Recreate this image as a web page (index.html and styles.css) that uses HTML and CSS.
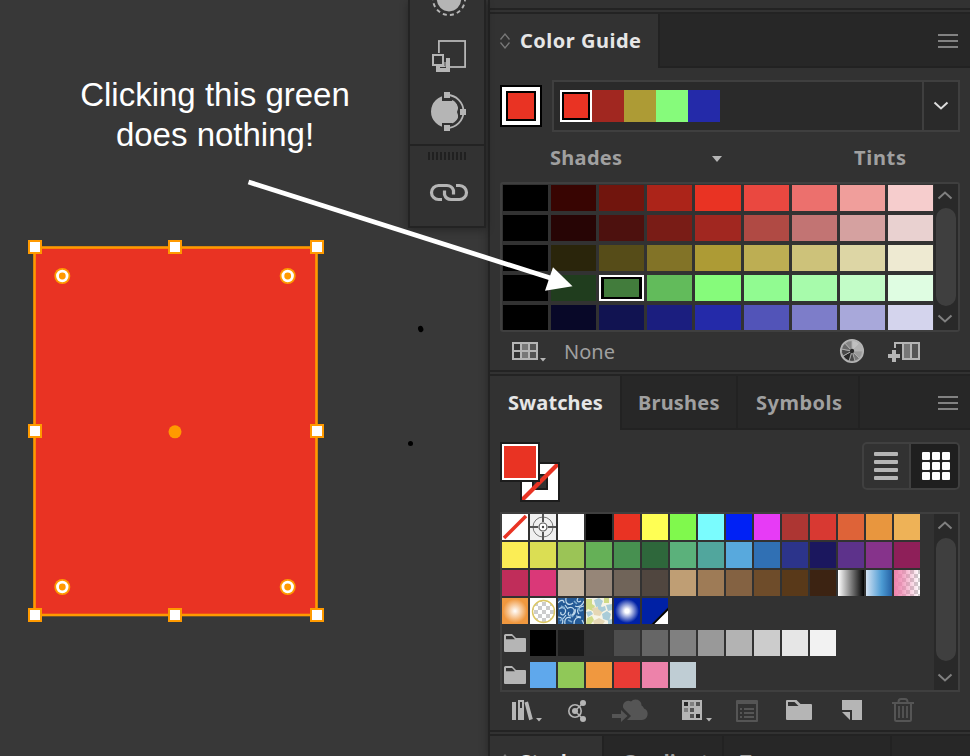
FILE: index.html
```
<!DOCTYPE html>
<html lang="en">
<head>
    <meta charset="UTF-8">
    <meta name="viewport" content="width=device-width, initial-scale=1.0">
    <title>Color Guide</title>
    <link rel="stylesheet" href="styles.css">
</head>
<body>

<!-- artwork used by the special swatches -->
<svg class="defs" width="0" height="0">
    <symbol id="none" viewBox="0 0 26 26">
        <rect width="26" height="26" fill="#fff"/>
        <path d="M2 24 L24 2" stroke="#e93323" stroke-width="3.6"/>
    </symbol>
    <symbol id="registration" viewBox="0 0 26 26">
        <rect width="26" height="26" fill="#f0f0f0"/>
        <circle cx="13" cy="13" r="10" fill="none" stroke="#777" stroke-width="1"/>
        <path d="M13 0v8M13 18v8M0 13h8M18 13h8" stroke="#555" stroke-width="2"/>
        <circle cx="13" cy="13" r="4" fill="#fff" stroke="#555" stroke-width="1.2"/>
        <circle cx="13" cy="13" r="1.2" fill="#444"/>
    </symbol>
    <symbol id="ring" viewBox="0 0 26 26">
        <rect width="26" height="26" fill="#fff"/>
        <circle cx="13.500" cy="13.500" r="11" fill="url(#checks)" stroke="#dcc763" stroke-width="1.400"/>
    </symbol>
    <symbol id="vines" viewBox="0 0 26 26">
        <rect width="26" height="26" fill="#245a96"/>
        <g fill="none" stroke="#c3dcee" stroke-width="1.200">
            <path d="M0 5c3-4 6-3 6 0M8 0c-1 6 3 8 7 5M17 8c4 2 8-1 9-5M20 0c-2 3 0 5 3 3"/>
            <path d="M1 11c4-3 8 0 6 4s-5 1-4-1M10 10c5-2 8 2 5 6s-6 1-4-2M26 8c-6 1-8 5-5 8"/>
            <path d="M0 19c4 0 6 3 4 7M7 26c-1-5 2-8 6-6M16 26c0-5 3-8 7-6M14 18c3-2 4-4 3-7"/>
            <path d="M7 7l3 4M8 17l-3 4M18 18l5 1M24 22l2 4"/>
        </g>
        <path d="M3 8l4 2M16 3l3 3M12 16l3 3M20 10l2 3M2 23l3-3M10 22l4 2M22 13l3-1" stroke="#79a8d0" stroke-width="1.600"/>
    </symbol>
    <symbol id="camo" viewBox="0 0 26 26">
        <rect width="26" height="26" fill="#f6f4e6"/>
        <path d="M0 1h6v5l3 2-2 5-5-2-2 2zM18 0h5v5h-5zM1 20l5-2 2 4-3 4H0z" fill="#cfdb87"/>
        <path d="M8 2l5-2 4 3-2 5-5 1zM20 7l6-1v6l-4 1zM16 16l5-3 4 3-2 7-6-2zM0 14l5-1 2 3-5 3z" fill="#a9ccd8"/>
        <path d="M6 10l6-1 5 4-3 5-6-1zM7 23l6-3 6 3-2 3H8z" fill="#e5d7b4"/>
        <path d="M12 6l4 3 3-1 1 4-4 2-4-3zM22 22l4-1v5h-4z" fill="#a9ccd8"/>
    </symbol>
    <symbol id="corner" viewBox="0 0 26 26">
        <rect width="26" height="26" fill="#0021a5"/>
        <path d="M26 10V26H10z" fill="#fff"/>
        <path d="M27 10L10 27" stroke="#000" stroke-width="2"/>
    </symbol>
    <symbol id="folder" viewBox="0 0 26 26">
        <path d="M2 5.500q0-1.500 1.500-1.500H10l4 4h9q1 0 1 1v12q0 1-1 1H3q-1 0-1-1z" fill="#b5b5b5"/>
        <path d="M4 6h6l3 3.300H4z" fill="#323232"/>
    </symbol>
    <symbol id="chevron" viewBox="0 0 16 10">
        <path d="M1.500 1.500L8 7.500l6.500-6" fill="none" stroke="currentColor" stroke-width="2"/>
    </symbol>
    <symbol id="updown" viewBox="0 0 12 18">
        <path d="M1.500 7.500L6 2l4.500 5.500M1.500 10.500L6 16l4.500-5.500" fill="none" stroke="#787878" stroke-width="1.300"/>
    </symbol>
    <defs>
        <pattern id="checks" width="8" height="8" patternUnits="userSpaceOnUse">
            <rect width="8" height="8" fill="#fff"/>
            <path d="M0 0h4v4H0zM4 4h4v4H4z" fill="#ccc"/>
        </pattern>
    </defs>
</svg>

<main class="canvas">
    <p class="note">Clicking this green<br>does nothing!</p>
    <svg class="artboard" width="488" height="756">
        <rect x="34.500" y="247.500" width="282" height="367.500" fill="#e93323" stroke="#ff9a00" stroke-width="2.600"/>
        <g fill="#fff" stroke="#ff9a00" stroke-width="2">
            <rect x="29" y="241" width="12" height="12"/>
            <rect x="169" y="241" width="12" height="12"/>
            <rect x="311" y="241" width="12" height="12"/>
            <rect x="29" y="425" width="12" height="12"/>
            <rect x="311" y="425" width="12" height="12"/>
            <rect x="29" y="609" width="12" height="12"/>
            <rect x="169" y="609" width="12" height="12"/>
            <rect x="311" y="609" width="12" height="12"/>
        </g>
        <g fill="#ff9a00">
            <circle cx="62.300" cy="276" r="8"/>
            <circle cx="287.700" cy="276" r="8"/>
            <circle cx="62.300" cy="587" r="8"/>
            <circle cx="287.700" cy="587" r="8"/>
            <circle cx="175" cy="431.800" r="6.500"/>
        </g>
        <g fill="#ff9a00" stroke="#fff" stroke-width="2.800">
            <circle cx="62.300" cy="276" r="4.800"/>
            <circle cx="287.700" cy="276" r="4.800"/>
            <circle cx="62.300" cy="587" r="4.800"/>
            <circle cx="287.700" cy="587" r="4.800"/>
        </g>
        <ellipse cx="420.700" cy="329" rx="2.600" ry="3.200" transform="rotate(-20 420.700 329)"/>
        <circle cx="410.500" cy="443.500" r="2.500"/>
    </svg>
</main>

<aside class="strip">
    <svg width="74" height="144" viewBox="410 0 74 144">
        <circle cx="449" cy="-0.800" r="12.200" fill="#b5b5b5"/>
        <circle cx="449" cy="-1" r="16" fill="none" stroke="#b5b5b5" stroke-width="1.900" stroke-dasharray="4 3.180" stroke-dashoffset="1.500"/>

        <rect x="438.900" y="41" width="26.200" height="26" fill="none" stroke="#b5b5b5" stroke-width="1.800"/>
        <path d="M436 58h14v14h-14z" fill="#b5b5b5"/>
        <path d="M438 62h8v6h-6v-2h-4v-4z" fill="#323232"/>
        <path d="M440 66.500h5v-4.500" fill="none" stroke="#b5b5b5" stroke-width="1.200"/>
        <path d="M430 53h16v9h-2v4h-14z" fill="#323232"/>
        <rect x="433" y="55" width="10" height="10" fill="#323232" stroke="#b5b5b5" stroke-width="2"/>

        <path d="M447 95.500A16 16 0 0 0 447 127.500Q458 124 458.300 116L457 112L458.300 108Q456 99 447 95.500Z" fill="#b5b5b5"/>
        <path d="M447 95.500A16.200 16.200 0 0 1 447 127.900" fill="none" stroke="#323232" stroke-width="7"/>
        <path d="M442 91h10v10h-10zM458 107h10v10h-10zM442 123h10v10h-10z" fill="#323232"/>
        <path d="M447 95A16.200 16.200 0 0 1 447 128" fill="none" stroke="#b5b5b5" stroke-width="1.800"/>
        <path d="M444 92h6v6h-6zM460 109h6v6h-6zM444 125h6v6h-6z" fill="#b5b5b5"/>
    </svg>
    <div class="strip-group">
        <div class="grip"></div>
        <svg class="link" width="40" height="20" viewBox="0 0 40 20" fill="none" stroke="#b5b5b5" stroke-width="3.200">
            <path d="M13 16.500H9.500a7 7 0 0 1 0-14H18a7 7 0 0 1 6.500 5v4"/>
            <path d="M27 2.500h3.500a7 7 0 0 1 0 14H22a7 7 0 0 1-6.500-5v-4"/>
        </svg>
    </div>
</aside>

<aside class="dock">
    <div class="panel-end"></div>

    <section class="panel guide">
        <header class="tabs">
            <div class="tab active wide-tab"><svg width="12" height="18"><use href="#updown"/></svg><span>Color Guide</span></div>
            <div class="menu"><i></i><i></i><i></i></div>
        </header>
        <div class="harmony">
            <div class="base"></div>
            <div class="rule">
                <div class="rule-colors" id="rule"></div>
                <button class="drop"><svg width="16" height="10"><use href="#chevron"/></svg></button>
            </div>
        </div>
        <div class="legend">
            <span class="shades">Shades</span>
            <span class="triangle"></span>
            <span class="tints">Tints</span>
        </div>
        <div class="box variations">
            <div class="shade-grid" id="shades"></div>
            <div class="scroll">
                <svg class="up" width="16" height="10"><use href="#chevron"/></svg>
                <div class="thumb"></div>
                <svg width="16" height="10"><use href="#chevron"/></svg>
            </div>
        </div>
        <footer class="guide-footer">
            <svg width="40" height="24" viewBox="0 0 40 24">
                <rect x="2" y="2" width="26" height="18" fill="#b5b5b5"/>
                <path d="M4 4h6v6H4zM4 12h6v6H4z" fill="#323232"/>
                <path d="M12 4h6v6h-6zM12 12h6v6h-6z" fill="#777"/>
                <path d="M20 4h6v6h-6zM20 12h6v6h-6z" fill="#555"/>
                <path d="M30 18h6l-3 3.500z" fill="#b5b5b5"/>
            </svg>
            <span class="library">None</span>
            <svg class="wheel" width="26" height="26" viewBox="-13 -13 26 26">
                <circle r="11.200" fill="#777" stroke="#b5b5b5" stroke-width="1.700"/>
                <g stroke="#b5b5b5" stroke-width=".8">
                    <path d="M0 0L0-10.500A10.500 10.500 0 0 1 7.400-7.400z" fill="#c0c0c0"/>
                    <path d="M0 0L7.400-7.400A10.500 10.500 0 0 1 10.500 0z" fill="#b2b2b2"/>
                    <path d="M0 0H10.500A10.500 10.500 0 0 1 7.400 7.400z" fill="#999"/>
                    <path d="M0 0L7.400 7.400A10.500 10.500 0 0 1 2.500 10.200z" fill="#777"/>
                    <path d="M0 0L3 10A10.500 10.500 0 0 1-3 10z" fill="#4a4a4a"/>
                    <path d="M0 0L-3 10A10.500 10.500 0 0 1-9 5z" fill="#292929"/>
                    <path d="M0 0L-9 5A10.500 10.500 0 0 1-10.500-2z" fill="#484848"/>
                    <path d="M0 0L-10.500-2A10.500 10.500 0 0 1-7-7.800z" fill="#686868"/>
                    <path d="M0 0L-7-7.800A10.500 10.500 0 0 1 0-10.500z" fill="#858585"/>
                </g>
                <circle r="2.200" fill="#292929"/>
            </svg>
            <svg class="add-group" width="36" height="24" viewBox="0 0 36 24">
                <path d="M8 2h26v18H16V4h-6v4H8z" fill="#b5b5b5"/>
                <path d="M18 4h6v14h-6z" fill="#777"/>
                <path d="M26 4h6v14h-6z" fill="#555"/>
                <path d="M6 10h4v4h4v4h-4v4H6v-4H2v-4h4z" fill="#b5b5b5"/>
            </svg>
        </footer>
    </section>

    <section class="panel swatches">
        <header class="tabs">
            <div class="tab active swatches-tab"><span>Swatches</span></div>
            <div class="tab brushes-tab"><span>Brushes</span></div>
            <div class="tab symbols-tab"><span>Symbols</span></div>
            <div class="menu"><i></i><i></i><i></i></div>
        </header>
        <div class="toolbar">
            <svg width="60" height="60" viewBox="0 0 60 60">
                <rect x="21" y="21" width="38" height="38" fill="#fff" stroke="#1c1c1c" stroke-width="2"/>
                <rect x="33" y="33" width="14" height="14" fill="#323232" stroke="#1c1c1c" stroke-width="2"/>
                <path d="M22 55L55 22H58V25L25 58H22z" fill="#e93323"/>
                <rect x="1" y="1" width="38" height="38" fill="#fff" stroke="#1c1c1c" stroke-width="2"/>
                <rect x="4" y="4" width="32" height="32" fill="#e93323"/>
            </svg>
            <div class="view">
                <div class="view-list"><i></i><i></i><i></i><i></i></div>
                <div class="view-grid"><i></i><i></i><i></i><i></i><i></i><i></i><i></i><i></i><i></i></div>
            </div>
        </div>
        <div class="box library-box">
            <div class="swatch-list">
                <div class="swatch-row" id="main"></div>
                <div class="swatch-row" id="grays"></div>
                <div class="swatch-row" id="brights"></div>
            </div>
            <div class="scroll">
                <svg class="up" width="16" height="10"><use href="#chevron"/></svg>
                <div class="thumb"></div>
                <svg width="16" height="10"><use href="#chevron"/></svg>
            </div>
        </div>
        <footer class="swatch-footer">
            <svg width="34" height="28" fill="#b5b5b5">
                <path d="M2 5h4v18H2zM8 3h6v20H8zM14.500 5.500l3.500-1 4.800 17.500-3.600 1.200z"/>
                <path d="M10 5h2v6h-2z" fill="#323232"/>
                <path d="M26 21h6l-3 3.500z"/>
            </svg>
            <svg width="28" height="28" fill="#b5b5b5">
                <circle cx="11" cy="14" r="6.200" fill="none" stroke="#b5b5b5" stroke-width="1.600"/>
                <path d="M19 6l-8 8 8 8" fill="none" stroke="#b5b5b5" stroke-width="1.400"/>
                <circle cx="11" cy="14" r="3"/><circle cx="19" cy="6" r="3"/><circle cx="19" cy="22" r="3"/>
            </svg>
            <svg width="42" height="28" fill="#555">
                <path d="M17 23h15a6 6 0 0 0 2-11.500A4.500 4.500 0 0 0 31.500 8.500A6 6 0 0 0 21 4.500A5.500 5.500 0 0 0 13 10z"/>
                <path d="M12 10l9 9-9 9z" fill="#323232"/>
                <path d="M2 17h9v-4l6.500 6-6.500 6v-4H2z"/>
            </svg>
            <svg width="34" height="28" fill="#b5b5b5">
                <rect x="2" y="3" width="20" height="20"/>
                <path d="M4 5h4v4H4zM16 17h4v4h-4z" fill="#292929"/>
                <path d="M10 5h4v4h-4zM4 11h4v4H4z" fill="#808080"/>
                <path d="M16 5h4v4h-4zM10 11h4v4h-4zM10 17h4v4h-4z" fill="#555"/>
                <path d="M26 21h6l-3 3.500z"/>
            </svg>
            <svg width="28" height="28" fill="#555">
                <path d="M3 3h20q1 0 1 1v20q0 1-1 1H3q-1 0-1-1V4q0-1 1-1zM4 7v16h18V7z" fill-rule="evenodd"/>
                <path d="M6 11h2v2H6zM6 15h2v2H6zM6 19h2v2H6zM10 11h10v2H10zM10 15h10v2H10zM10 19h10v2H10z"/>
            </svg>
            <svg width="30" height="28" fill="#b5b5b5">
                <path d="M2 4q0-1 1-1h9.500l4 4H27q1 0 1 1v14q0 1-1 1H3q-1 0-1-1z"/>
                <path d="M4 5h6.500l4 4H4z" fill="#323232"/>
            </svg>
            <svg width="24" height="28" fill="#b5b5b5">
                <path d="M2 3h20v20H12V13H2zM2 15h8v8z"/>
            </svg>
            <svg width="26" height="28" fill="none" stroke="#555" stroke-width="2">
                <path d="M2 6h22M5 6v16.500q0 1.500 1.500 1.500h13q1.500 0 1.500-1.500V6M8.500 5q0-3 2.500-3h4q2.500 0 2.500 3"/>
                <path d="M9 9v12M13 9v12M17 9v12" stroke-width="1.800"/>
            </svg>
        </footer>
    </section>

    <section class="panel stroke">
        <header class="tabs">
            <div class="tab active stroke-tab"><svg width="12" height="18"><use href="#updown"/></svg><span>Stroke</span></div>
            <div class="tab gradient-tab"><span>Gradient</span></div>
            <div class="tab transparency-tab"><span>Transparency</span></div>
        </header>
    </section>
</aside>

<svg class="arrow" width="340" height="130" viewBox="240 170 340 130" fill="#fff">
    <path d="M248.500 182L552 278.500" stroke="#fff" stroke-width="4.800"/>
    <path d="M553 267.300L572.500 286.300L545 290.800z"/>
</svg>

<script>
    const rule = ['#e93323', '#a12720', '#ad9b35', '#86fb7b', '#242aa9'];

    const shades = [
        ['#000000', '#380502', '#71150d', '#ac2419', '#e93323', '#ea4840', '#ec706d', '#f09e9b', '#f6cdcd'],
        ['#000000', '#270505', '#4d110e', '#791c16', '#a12720', '#b04a44', '#c27473', '#d5a1a0', '#e9d1d0'],
        ['#000000', '#2a250b', '#564c18', '#827327', '#ad9b35', '#bdae53', '#cdc27a', '#ddd6a5', '#eeead2'],
        ['#000000', '#203d1e', '#427c3c', '#62bb5b', '#86fb7b', '#91fb91', '#a7fbab', '#c2fcc7', '#dffde2'],
        ['#000000', '#080828', '#111351', '#1b1e7f', '#242aa9', '#5254b8', '#7d7dc9', '#a8a8da', '#d4d4ed']
    ];

    const main = [
        '@none', '@registration', '#ffffff', '#000000', '#e93323', '#ffff54', '#80f94d', '#7afcfe', '#0021f5', '#e73bf6', '#ad3633', '#d83932', '#de6338', '#e8963e', '#eeb257',
        '#fbed55', '#dbde53', '#9bc456', '#65b057', '#479050', '#2e673b', '#5bb17b', '#51a69d', '#58a9dd', '#3070b4', '#2c348b', '#1b175e', '#5d328b', '#86338b', '#8e1f59',
        '#c02d5a', '#da3878', '#c4b39f', '#968678', '#706459', '#50463f', '#bf9e74', '#9e7b56', '#846242', '#6e4c2a', '#593919', '#3c2312', '.fade-black', '.fade-blue', '.fade-pink',
        '.glow-orange', '@ring', '@vines', '@camo', '.glow-blue', '@corner'
    ];

    const grays = ['@folder', '#000000', '#1a1a1a', '#333333', '#4d4d4d', '#666666', '#808080', '#999999', '#b3b3b3', '#cccccc', '#e6e6e6', '#f2f2f2'];
    const brights = ['@folder', '#5fa8ec', '#90c858', '#f0983f', '#e83b35', '#ed82aa', '#bfcdd4'];

    // '@name' is a symbol, '.name' is a css class, anything else is a colour
    function swatch(value) {
        if (value[0] === '@') {
            return `<svg class="swatch"><use href="#${value.slice(1)}"/></svg>`;
        }
        if (value[0] === '.') {
            return `<div class="swatch ${value.slice(1)}"></div>`;
        }
        return `<div class="swatch" style="background:${value}"></div>`;
    }

    function fill(id, colors) {
        document.getElementById(id).innerHTML = colors.map(swatch).join('');
    }

    fill('rule', rule);
    fill('shades', shades.flat());
    fill('main', main);
    fill('grays', grays);
    fill('brights', brights);

    document.querySelector('#rule .swatch').classList.add('current');
    document.querySelectorAll('#shades .swatch')[29].classList.add('picked');
</script>

</body>
</html>
```
FILE: styles.css
```
* {
    box-sizing: border-box;
}
body {
    margin: 0;
    width: 970px;
    height: 756px;
    overflow: hidden;
    display: flex;
    position: relative;
    background: #383838;
    font-family: "Noto Sans", sans-serif;
    color: #a0a0a0;
}
svg {
    display: block;
    flex: none;
}
.defs, .artboard, .arrow {
    position: absolute;
}

/* canvas */
.canvas {
    width: 488px;
    flex: none;
    position: relative;
}
.artboard {
    left: 0;
    top: 0;
}
.note {
    margin: 0;
    padding: 75px 58px 0 0;
    text-align: center;
    color: #fff;
    font: 33px/40px "Liberation Sans", sans-serif;
}
.arrow {
    left: 240px;
    top: 170px;
}

/* floating icon strip */
.strip {
    position: absolute;
    left: 408px;
    top: 0;
    width: 78px;
    height: 228px;
    background: #323232;
    border: 2px solid #232323;
    border-top: 0;
    box-shadow: 0 2px 8px rgba(0, 0, 0, .3);
}
.strip-group {
    border-top: 2px solid #232323;
    display: flex;
    flex-direction: column;
    align-items: center;
    padding-top: 6px;
    gap: 23px;
}
.grip {
    width: 38px;
    height: 8px;
    background: repeating-linear-gradient(90deg, #202020 0 2px, #323232 2px 4px);
}
.link {
    margin-left: 4px;
}

/* dock */
.dock {
    flex: 1;
    height: 756px;
    overflow: hidden;
    background: #323232;
    border-left: 2px solid #232323;
    box-shadow: 0 0 8px rgba(0, 0, 0, .35);
}
.panel-end {
    height: 10px;
    border-bottom: 2px solid #232323;
    margin-bottom: 2px;
}
.panel {
    border-top: 2px solid #232323;
    border-bottom: 2px solid #232323;
    margin-bottom: 2px;
}
.guide {
    height: 360px;
}
.swatches {
    height: 358px;
}
.stroke {
    height: 22px;
    margin-bottom: 0;
    border-bottom: 0;
    overflow: hidden;
}
.tabs {
    display: flex;
    height: 54px;
    background: #272727;
    box-shadow: inset 0 -2px #222;
}
.tab {
    display: flex;
    align-items: center;
    padding: 0 0 2px 18px;
    border-right: 2px solid #222;
    font-size: 20px;
    font-weight: 700;
    white-space: nowrap;
}
.tab.active {
    background: #323232;
    color: #e6e6e6;
}
.tab svg {
    margin-top: 2px;
}
.wide-tab, .stroke-tab {
    padding-left: 9px;
    gap: 9px;
}
.wide-tab {
    width: 170px;
    letter-spacing: .5px;
}
.swatches-tab {
    width: 132px;
    letter-spacing: .1px;
}
.brushes-tab {
    width: 116px;
    padding-left: 16px;
    letter-spacing: .2px;
}
.symbols-tab {
    width: 122px;
    letter-spacing: .5px;
}
.stroke .tab {
    padding-bottom: 4px;
}
.stroke-tab {
    width: 114px;
}
.gradient-tab {
    width: 120px;
}
.transparency-tab {
    width: 168px;
    padding-left: 16px;
}
.menu {
    margin: 20px 12px 0 auto;
    width: 20px;
    display: flex;
    flex-direction: column;
    gap: 4px;
}
.menu i {
    height: 2px;
    background: #828282;
}

.harmony {
    display: flex;
    align-items: center;
    gap: 10px;
    padding: 12px 10px 0;
}
.base {
    width: 42px;
    height: 42px;
    background: #e93323;
    border: 2px solid #000;
    box-shadow: inset 0 0 0 4px #fff, inset 0 0 0 6px #000;
}
.rule {
    flex: 1;
    display: flex;
    height: 52px;
    border: 2px solid #3f3f3f;
    background: #2a2a2a;
}
.rule-colors {
    flex: 1;
    display: flex;
    padding: 8px 6px;
}
.rule-colors .swatch {
    width: 32px;
    height: 32px;
}
.rule-colors .current {
    box-shadow: inset 0 0 0 2px #fff, inset 0 0 0 4px #000;
}
.drop {
    width: 36px;
    padding: 0 0 0 9px;
    border: 0;
    border-left: 2px solid #3f3f3f;
    background: none;
    color: #ddd;
}
.legend {
    display: flex;
    align-items: center;
    height: 50px;
    padding-left: 60px;
    font-size: 20px;
    font-weight: 700;
}
.shades {
    width: 162px;
    letter-spacing: .3px;
}
.triangle {
    margin-top: 3px;
    border: 5px solid transparent;
    border-top: 6px solid #b5b5b5;
    border-bottom: 0;
}
.tints {
    margin-left: 132px;
    letter-spacing: .7px;
}

.box {
    display: flex;
    margin: 0 10px;
    border: 2px solid #3f3f3f;
    border-radius: 3px;
}
.variations {
    height: 150px;
}
.shade-grid {
    flex: 1;
    display: grid;
    grid-template-columns: repeat(4, 45px) 46px repeat(4, 45px);
    grid-template-rows: repeat(4, 26px) 25px;
    gap: 4px 3px;
    padding: 1px;
}
.shade-grid .picked {
    border: 2px solid #fff;
    box-shadow: inset 3px 2px #000, inset -3px -2px #000;
}
.scroll {
    width: 24px;
    background: #292929;
    display: flex;
    flex-direction: column;
    align-items: center;
    gap: 8px;
    padding: 6px 0;
    color: #808080;
}
.scroll svg {
    margin-right: 2px;
}
.scroll .thumb {
    flex: 1;
    width: 20px;
    border-radius: 10px;
    background: #3f3f3f;
}
.up {
    transform: scaleY(-1);
}
.guide-footer {
    display: flex;
    align-items: center;
    padding: 6px 0 0 20px;
}
.library {
    width: 275px;
    margin-left: 14px;
    font-size: 20px;
    line-height: 28px;
}
.wheel {
    margin-bottom: 2px;
}
.add-group {
    margin-left: 21px;
}

/* swatches panel */
.toolbar {
    display: flex;
    justify-content: space-between;
    align-items: flex-start;
    padding: 12px 10px 10px;
}
.view {
    display: flex;
    width: 98px;
    height: 48px;
    border: 2px solid #404040;
    border-radius: 5px;
    overflow: hidden;
}
.view-list {
    width: 47px;
    padding: 8px 10px;
    border-right: 2px solid #404040;
    display: flex;
    flex-direction: column;
    gap: 4px;
}
.view-list i {
    width: 24px;
    height: 4px;
    border-radius: 1px;
    background: #b5b5b5;
}
.view-grid {
    flex: 1;
    padding: 8px 0 0 11px;
    background: #1f1f1f;
    display: grid;
    grid-template-columns: repeat(3, 8px);
    grid-auto-rows: 8px;
    gap: 2px;
}
.view-grid i {
    border-radius: 1px;
    background: #fafafa;
}
.library-box {
    height: 180px;
    border-radius: 0;
}
.library-box .scroll {
    padding-bottom: 7px;
}
.library-box .thumb {
    margin-bottom: 4px;
}
.swatch-list {
    flex: 1;
    display: flex;
    flex-direction: column;
    gap: 6px;
}
.swatch-row {
    display: grid;
    grid-template-columns: repeat(15, 26px);
    grid-auto-rows: 26px;
    gap: 2px;
}
.swatch-row .swatch {
    width: 26px;
    height: 26px;
}
.fade-black {
    background: linear-gradient(90deg, #fff, #000);
}
.fade-blue {
    background: linear-gradient(90deg, #d3e2f3, #4c9bd3 60%, #2662a5);
}
.fade-pink {
    background: linear-gradient(90deg, #ee82ad, rgba(238, 130, 173, .75) 30%, rgba(238, 130, 173, 0)), repeating-conic-gradient(#fff 0 25%, #ccc 0 50%) 0 0 / 8px 8px;
}
.glow-orange {
    background: radial-gradient(circle, #fff, #f0983f 12px);
}
.glow-blue {
    background: radial-gradient(circle, #fff 2px, #0021a5 12px);
}
.swatch-footer {
    display: grid;
    grid-template-columns: 54px 46px 70px 54px 50px 56px 50px 30px;
    padding: 5px 0 0 20px;
}
```
